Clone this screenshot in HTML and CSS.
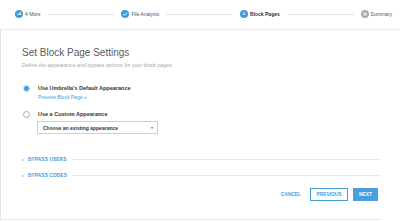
FILE: index.html
```html
<!DOCTYPE html>
<html lang="en">

<head>
    <meta charset="UTF-8">
    <meta name="viewport" content="width=device-width, initial-scale=1.0">
    <title>Block Pages</title>
    <link rel="stylesheet" href="styles.css">
</head>

<body>
    <div class="steps">
        <div class="step done">
            <span class="dot blue">+4</span>
            <span class="steplabel">4 More</span>
        </div>
        <div class="line"></div>
        <div class="step done">
            <span class="dot blue">
                <svg width="8" height="8" viewBox="0 0 8 8"><path d="M2.3 4.1 L3.5 5.3 L5.8 2.8" fill="none" stroke="#fff" stroke-width="1"/></svg>
            </span>
            <span class="steplabel">File Analysis</span>
        </div>
        <div class="line"></div>
        <div class="step current">
            <span class="dot blue">6</span>
            <span class="steplabel">Block Pages</span>
        </div>
        <div class="line"></div>
        <div class="step">
            <span class="dot gray">
                <svg width="8" height="8" viewBox="0 0 8 8"><circle cx="4" cy="4" r="2" fill="#dcdcdc"/></svg>
            </span>
            <span class="steplabel">Summary</span>
        </div>
    </div>

    <div class="panel">
        <h1>Set Block Page Settings</h1>
        <p class="sub">Define the appearance and bypass options for your block pages.</p>

        <div class="option">
            <span class="radio checked"></span>
            <span class="optlabel">Use Umbrella's Default Appearance</span>
        </div>
        <a class="preview" href="#">Preview Block Page &raquo;</a>

        <div class="option second">
            <span class="radio"></span>
            <span class="optlabel">Use a Custom Appearance</span>
        </div>
        <div class="select">
            <span>Choose an existing appearance</span>
            <span class="arrow">&#9662;</span>
        </div>

        <div class="section first">
            <span class="caret">&#9656;</span>
            <span class="sectitle">BYPASS USERS</span>
            <span class="secline"></span>
        </div>
        <div class="section">
            <span class="caret">&#9656;</span>
            <span class="sectitle">BYPASS CODES</span>
            <span class="secline"></span>
        </div>

        <div class="actions">
            <button class="btn cancel">CANCEL</button>
            <button class="btn prev">PREVIOUS</button>
            <button class="btn next">NEXT</button>
        </div>
    </div>
</body>

</html>
```

FILE: styles.css
```css
* {
    margin: 0;
    padding: 0;
    box-sizing: border-box;
}

body {
    width: 400px;
    background-color: #fff;
    font-family: "Liberation Sans", Arial, sans-serif;
    color: #333;
}

.steps {
    height: 30px;
    border-bottom: 1px solid #ebebeb;
    display: flex;
    align-items: center;
    padding: 0 8px 1px 15px;
}

.step {
    display: flex;
    align-items: center;
    font-size: 5px;
    color: #555;
}

.step.current {
    font-weight: bold;
    color: #333;
}

.dot {
    width: 8px;
    height: 8px;
    border-radius: 50%;
    display: flex;
    align-items: center;
    justify-content: center;
    color: #fff;
    font-size: 3.5px;
    font-weight: bold;
    margin-right: 2px;
}

.blue {
    background-color: #3d9ddf;
}

.gray {
    background-color: #a9a9ab;
}

.line {
    flex: 1;
    height: 1px;
    background-color: #e3e3e3;
    margin: 0 7px;
}

.panel {
    width: 381px;
    height: 190px;
    border-left: 1px solid #e2e2e2;
    border-bottom: 1px solid #e6e6e6;
    padding: 0 1px 0 21px;
    overflow: hidden;
}

h1 {
    font-size: 10px;
    line-height: 12px;
    font-weight: normal;
    color: #5a5a5a;
    margin-top: 17px;
}

.sub {
    font-size: 5.3px;
    line-height: 7px;
    color: #a8a8a8;
    margin-top: 3px;
}

.option {
    display: flex;
    align-items: center;
    height: 8px;
    margin-top: 15px;
    padding-left: 1px;
}

.option.second {
    margin-top: 9px;
}

.radio {
    width: 7px;
    height: 7px;
    border-radius: 50%;
    border: 0.7px solid #aaa;
    margin-right: 8px;
    background-color: #fff;
}

.radio.checked {
    border: 1.5px solid #cfe6f7;
    background-color: #3d9ddf;
}

.optlabel {
    font-size: 5.5px;
    font-weight: bold;
    color: #333;
}

.preview {
    display: block;
    font-size: 5px;
    line-height: 7px;
    color: #3d9ddf;
    text-decoration: none;
    margin: 2px 0 0 16px;
}

.select {
    width: 121px;
    height: 13px;
    margin: 3px 0 0 15px;
    border: 0.7px solid #cfcfcf;
    display: flex;
    align-items: center;
    justify-content: space-between;
    padding: 0 4px 0 5px;
    font-size: 5px;
    font-weight: bold;
    color: #333;
}

.arrow {
    font-size: 4px;
    color: #888;
}

.section {
    display: flex;
    align-items: center;
    height: 7px;
    margin-top: 9px;
}

.section.first {
    margin-top: 22px;
}

.caret {
    font-size: 4px;
    color: #aaa;
    width: 6px;
}

.sectitle {
    font-size: 4.8px;
    font-weight: bold;
    color: #3d9ddf;
    letter-spacing: 0.1px;
}

.secline {
    flex: 1;
    height: 1px;
    background-color: #e6e6e6;
    margin-left: 6px;
}

.actions {
    display: flex;
    justify-content: flex-end;
    align-items: center;
    margin-top: 9px;
    padding-right: 2px;
}

.btn {
    font-family: "Liberation Sans", Arial, sans-serif;
    font-size: 4.8px;
    font-weight: bold;
    height: 13px;
    background: none;
    border: none;
    cursor: pointer;
}

.cancel {
    color: #3d9ddf;
    margin-right: 9px;
}

.prev {
    width: 38px;
    border: 0.8px solid #3d9ddf;
    color: #3d9ddf;
    margin-right: 5px;
}

.next {
    width: 25px;
    background-color: #4a9fdf;
    color: #fff;
}
```
